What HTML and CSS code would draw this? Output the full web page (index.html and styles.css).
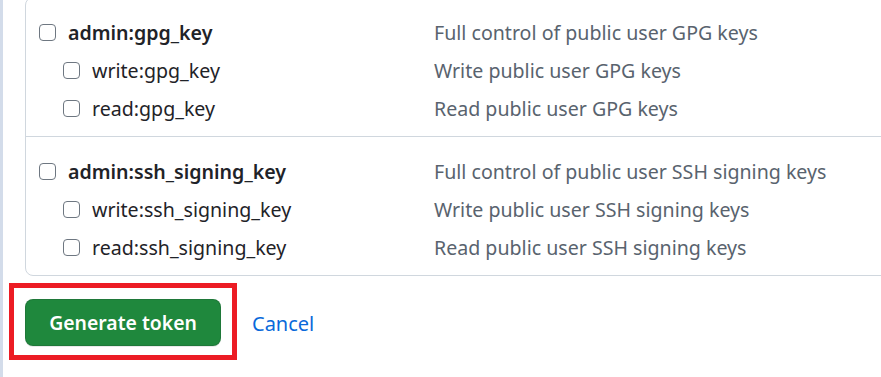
FILE: index.html
```html
<!doctype html>
<html>
<head>
<meta charset="utf-8">
<title>New personal access token</title>
<link rel="stylesheet" href="styles.css">
</head>
<body>
  <div class="page">
    <div class="scopes">
      <div class="group">
        <div class="scope">
          <label class="name top"><input type="checkbox" class="box"> <b>admin:gpg_key</b></label>
          <span class="desc">Full control of public user GPG keys</span>
        </div>
        <div class="scope">
          <label class="name sub"><input type="checkbox" class="box"> write:gpg_key</label>
          <span class="desc">Write public user GPG keys</span>
        </div>
        <div class="scope">
          <label class="name sub"><input type="checkbox" class="box"> read:gpg_key</label>
          <span class="desc">Read public user GPG keys</span>
        </div>
      </div>

      <div class="group">
        <div class="scope">
          <label class="name top"><input type="checkbox" class="box"> <b>admin:ssh_signing_key</b></label>
          <span class="desc">Full control of public user SSH signing keys</span>
        </div>
        <div class="scope">
          <label class="name sub"><input type="checkbox" class="box"> write:ssh_signing_key</label>
          <span class="desc">Write public user SSH signing keys</span>
        </div>
        <div class="scope">
          <label class="name sub"><input type="checkbox" class="box"> read:ssh_signing_key</label>
          <span class="desc">Read public user SSH signing keys</span>
        </div>
      </div>
    </div>

    <div class="actions">
      <div class="highlight">
        <button class="btn-primary" type="submit">Generate token</button>
      </div>
      <a class="cancel" href="#">Cancel</a>
    </div>
  </div>
</body>
</html>
```

FILE: styles.css
```css
html, body { margin:0; padding:0; background:#fff; }

body {
  min-height:100vh;
  box-sizing:border-box;
  border-left:3px solid #d3dcea;
  font-family:"Noto Sans", "Open Sans", sans-serif;
  font-size:19.6px;
  color:#1f2328;
  overflow:hidden;
}

.page {
  padding-left:6px;
}

.scopes {
  margin:-3px -40px 0 16px;
  border:1px solid #d0d7de;
  border-radius:8px;
}

.group {
  padding:15px 0 9px 13px;
}

.group + .group {
  border-top:1px solid #d0d7de;
}

.scope {
  display:grid;
  grid-template-columns:395px 1fr;
  align-items:center;
  height:38px;
}

.name {
  display:flex;
  align-items:center;
  gap:12px;
  white-space:nowrap;
}

.name b { font-weight:600; }

.name.sub { padding-left:24px; }

.box {
  appearance:none;
  -webkit-appearance:none;
  margin:0;
  width:17px;
  height:17px;
  border:1.5px solid #6e7781;
  border-radius:4px;
  background:#fff;
  flex:none;
}

.desc {
  color:#59636e;
  white-space:nowrap;
}

.actions {
  display:flex;
  align-items:center;
  gap:15px;
  margin-top:7px;
}

.highlight {
  border:5px solid #ec1c24;
  padding:11px 11px 9px 11px;
}

.btn-primary {
  display:block;
  width:196px;
  height:47px;
  padding:0;
  font-family:inherit;
  font-size:19.4px;
  font-weight:600;
  color:#fff;
  background:#1f883d;
  border:1px solid rgba(31,35,40,.15);
  border-radius:8px;
  box-shadow:0 1px 0 rgba(31,35,40,.1);
}

.cancel {
  color:#0969da;
  text-decoration:none;
  font-size:20px;
  padding-top:4px;
}
```
